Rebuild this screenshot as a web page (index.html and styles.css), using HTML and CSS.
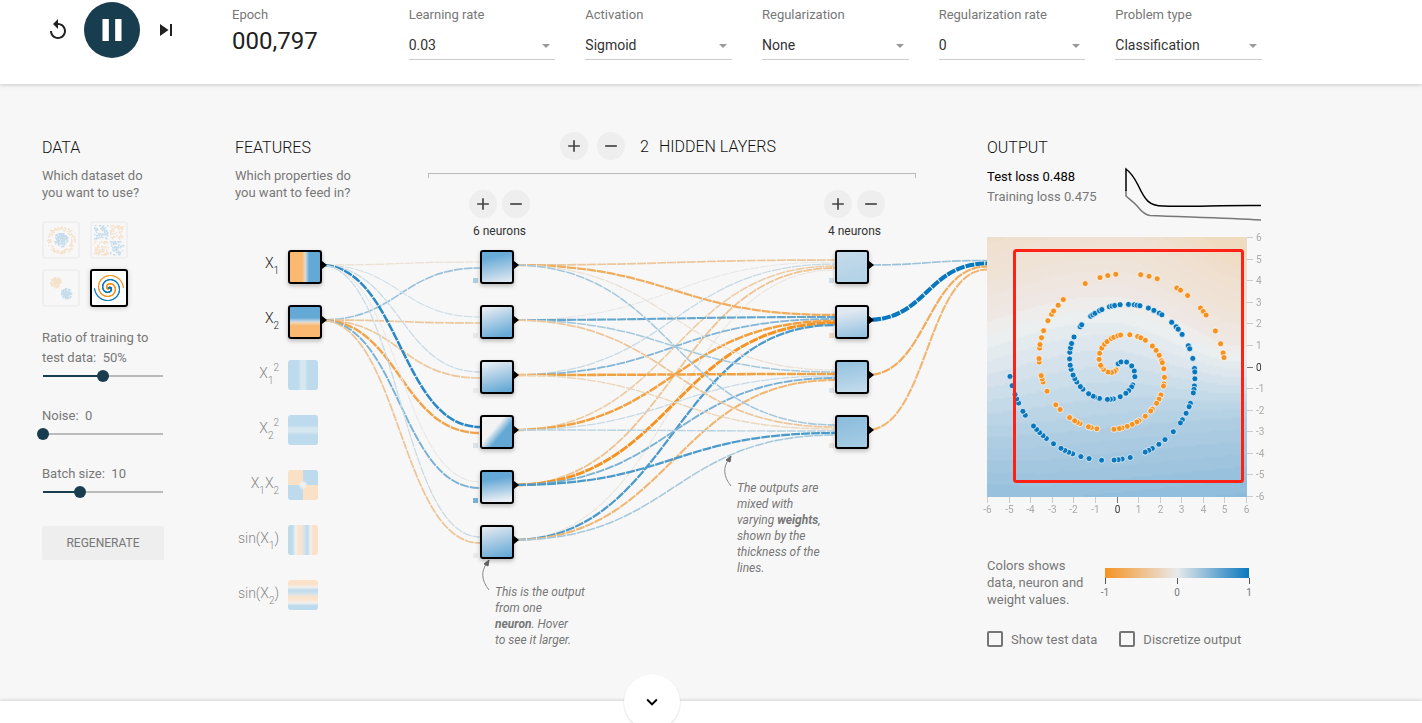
FILE: index.html
```html
<!DOCTYPE html>
<html lang="en">
<head>
<meta charset="utf-8">
<title>Neural Network Playground</title>
<link rel="stylesheet" href="styles.css">
</head>
<body>
<header class="topbar">
  <div class="topbar-inner">
    <div class="timeline">
      <button class="icon-button" aria-label="Reset"><svg width="24" height="24" viewBox="0 0 24 24"><path d="M12 5V1L7 6l5 5V7c3.31 0 6 2.69 6 6s-2.69 6-6 6-6-2.69-6-6H4c0 4.42 3.58 8 8 8s8-3.58 8-8-3.58-8-8-8z"/></svg></button>
      <button class="play-button" aria-label="Pause"><svg width="38" height="38" viewBox="0 0 24 24"><path d="M6 19h4V5H6v14zm8-14v14h4V5h-4z"/></svg></button>
      <button class="icon-button" aria-label="Step"><svg width="24" height="24" viewBox="0 0 24 24"><path d="M6 18l8.500-6L6 6v12zM16 6v12h2V6h-2z"/></svg></button>
    </div>
    <div class="control">
      <span class="control-label">Epoch</span>
      <output class="epoch">000,797</output>
    </div>
    <div class="control">
      <label class="control-label" for="rate">Learning rate</label>
      <div class="select"><select id="rate"><option>0.03</option></select></div>
    </div>
    <div class="control">
      <label class="control-label" for="activation">Activation</label>
      <div class="select"><select id="activation"><option>Sigmoid</option></select></div>
    </div>
    <div class="control">
      <label class="control-label" for="regularization">Regularization</label>
      <div class="select"><select id="regularization"><option>None</option></select></div>
    </div>
    <div class="control">
      <label class="control-label" for="regrate">Regularization rate</label>
      <div class="select"><select id="regrate"><option>0</option></select></div>
    </div>
    <div class="control">
      <label class="control-label" for="problem">Problem type</label>
      <div class="select"><select id="problem"><option>Classification</option></select></div>
    </div>
  </div>
</header>

<main class="stage">
  <div class="stage-inner">
    <section class="data">
      <h2 class="heading">DATA</h2>
      <p class="hint">Which dataset do<br>you want to use?</p>
      <div class="datasets">
        <button class="dataset" aria-label="Circle"><svg class="thumb" data-set="circle" viewBox="0 0 34 34"></svg></button>
        <button class="dataset" aria-label="Exclusive or"><svg class="thumb" data-set="xor" viewBox="0 0 34 34"></svg></button>
        <button class="dataset" aria-label="Gaussian"><svg class="thumb" data-set="gauss" viewBox="0 0 34 34"></svg></button>
        <button class="dataset selected" aria-label="Spiral"><svg class="thumb" data-set="spiral" viewBox="0 0 34 34"></svg></button>
      </div>
      <div class="slider">
        <label for="ratio">Ratio of training to<br>test data:&nbsp; 50%</label>
        <input id="ratio" type="range" min="10" max="90" value="50" style="--fill: 50%">
      </div>
      <div class="slider">
        <label for="noise">Noise:&nbsp; 0</label>
        <input id="noise" type="range" min="0" max="50" value="0" style="--fill: 0%">
      </div>
      <div class="slider">
        <label for="batch">Batch size:&nbsp; 10</label>
        <input id="batch" type="range" min="1" max="30" value="10" style="--fill: 31%">
      </div>
      <button class="regenerate">REGENERATE</button>
    </section>

    <section class="network">
      <div class="network-head">
        <div>
          <h2 class="heading">FEATURES</h2>
          <p class="hint">Which properties do<br>you want to feed in?</p>
        </div>
        <div class="hidden-layers">
          <div class="layer-count">
            <button class="round" aria-label="Add layer"><svg width="20" height="20" viewBox="0 0 24 24"><path d="M19 13h-6v6h-2v-6H5v-2h6V5h2v6h6v2z"/></svg></button>
            <button class="round" aria-label="Remove layer"><svg width="20" height="20" viewBox="0 0 24 24"><path d="M19 13H5v-2h14v2z"/></svg></button>
            <span class="count">2</span><span>HIDDEN LAYERS</span>
          </div>
          <div class="bracket"></div>
          <div class="layer-controls">
            <div class="layer-control">
              <button class="round" aria-label="Add neuron to layer 1"><svg width="20" height="20" viewBox="0 0 24 24"><path d="M19 13h-6v6h-2v-6H5v-2h6V5h2v6h6v2z"/></svg></button>
              <button class="round" aria-label="Remove neuron from layer 1"><svg width="20" height="20" viewBox="0 0 24 24"><path d="M19 13H5v-2h14v2z"/></svg></button>
              <span class="neurons">6 neurons</span>
            </div>
            <div class="layer-control">
              <button class="round" aria-label="Add neuron to layer 2"><svg width="20" height="20" viewBox="0 0 24 24"><path d="M19 13h-6v6h-2v-6H5v-2h6V5h2v6h6v2z"/></svg></button>
              <button class="round" aria-label="Remove neuron from layer 2"><svg width="20" height="20" viewBox="0 0 24 24"><path d="M19 13H5v-2h14v2z"/></svg></button>
              <span class="neurons">4 neurons</span>
            </div>
          </div>
        </div>
      </div>
      <div class="diagram">
        <svg class="links" width="752" height="408" viewBox="0 0 752 408">
          <g id="links"></g>
          <g id="marks"></g>
          <g class="feature-labels">
            <text x="44" y="29" class="on">X<tspan class="script" dy="6">1</tspan></text>
            <text x="44" y="84" class="on">X<tspan class="script" dy="6">2</tspan></text>
            <text x="44" y="139">X<tspan class="script" dy="6">1</tspan><tspan class="script" dy="-13">2</tspan></text>
            <text x="44" y="194">X<tspan class="script" dy="6">2</tspan><tspan class="script" dy="-13">2</tspan></text>
            <text x="44" y="249">X<tspan class="script" dy="6">1</tspan><tspan dy="-6">X</tspan><tspan class="script" dy="6">2</tspan></text>
            <text x="44" y="304">sin(X<tspan class="script" dy="6">1</tspan><tspan dy="-6">)</tspan></text>
            <text x="44" y="359">sin(X<tspan class="script" dy="6">2</tspan><tspan dy="-6">)</tspan></text>
          </g>
          <g class="pointer">
            <path d="M254 351C246 341 246 332 252 324"/><path class="tip" d="M254 321l-1 6-4-2z"/>
            <path d="M496 247C488 237 488 228 494 220"/><path class="tip" d="M496 217l-1 6-4-2z"/>
          </g>
        </svg>
        <div class="column features">
          <div class="node f-x1"></div>
          <div class="node f-x2"></div>
          <div class="node off f-x1sq"></div>
          <div class="node off f-x2sq"></div>
          <div class="node off f-x1x2"></div>
          <div class="node off f-sin1"></div>
          <div class="node off f-sin2"></div>
        </div>
        <div class="column layer-one">
          <div class="node n1"></div>
          <div class="node n2"></div>
          <div class="node n3"></div>
          <div class="node n4"></div>
          <div class="node n5"></div>
          <div class="node n6"></div>
        </div>
        <div class="column layer-two">
          <div class="node m1"></div>
          <div class="node m2"></div>
          <div class="node m3"></div>
          <div class="node m4"></div>
        </div>
        <p class="callout neuron-note">This is the output<br>from one<br><b>neuron</b>. Hover<br>to see it larger.</p>
        <p class="callout weight-note">The outputs are<br>mixed with<br>varying <b>weights</b>,<br>shown by the<br>thickness of the<br>lines.</p>
      </div>
    </section>

    <section class="output">
      <h2 class="heading">OUTPUT</h2>
      <div class="loss">
        <div class="loss-values">
          <div class="test-loss">Test loss 0.488</div>
          <div>Training loss 0.475</div>
        </div>
        <svg width="137" height="56" viewBox="0 0 137 56">
          <path class="train-line" d="M1 24 1 30C4 33 8 35 13 41C17 46 20 49 25 49.500C60 51 100 52 136 54"/>
          <path class="test-line" d="M1 25V3C5 6 9 11 13 19C20 34 24 40 38 40C60 41 100 39 136 39.500"/>
        </svg>
      </div>
      <div class="plot">
        <canvas id="heat" width="130" height="130"></canvas>
        <svg class="plot-layer" width="275" height="280" viewBox="0 0 275 280">
          <g id="axes"></g>
          <g id="points"></g>
          <rect class="selection" x="27.500" y="13.500" width="228" height="231" rx="2"/>
        </svg>
      </div>
      <div class="legend">
        <p>Colors shows<br>data, neuron and<br>weight values.</p>
        <div class="scale">
          <div class="scale-bar"></div>
          <div class="scale-ticks"><span>-1</span><span>0</span><span>1</span></div>
        </div>
      </div>
      <div class="options">
        <label><input type="checkbox">Show test data</label>
        <label><input type="checkbox">Discretize output</label>
      </div>
    </section>
  </div>
</main>
<div class="below">
  <button class="more" aria-label="Read more"><svg width="22" height="22" viewBox="0 0 24 24"><path d="M7.410 8.590 12 13.170l4.590-4.580L18 10l-6 6-6-6z"/></svg></button>
</div>
<script src="playground.js"></script>
</body>
</html>
```

FILE: styles.css
```css
* { box-sizing: border-box; }
html { overflow: hidden; }
body {
  margin: 0;
  background: #fff;
  color: #777;
  font: 13px/17px Roboto, "Liberation Sans", sans-serif;
}
h2, p { margin: 0; }
button {
  padding: 0;
  border: 0;
  background: none;
  color: inherit;
  font: inherit;
  cursor: pointer;
}
svg { display: block; }

.topbar {
  position: relative;
  height: 84px;
  background: #fff;
  box-shadow: 0 1px 4px rgba(0, 0, 0, .2);
}
.topbar-inner {
  display: grid;
  grid-template-columns: 160px repeat(6, 1fr);
  gap: 30px;
  max-width: 1262px;
  padding: 2px 0 0 42px;
}
.timeline {
  display: flex;
  align-items: center;
  gap: 14px;
  height: 56px;
  padding-left: 4px;
}
.icon-button svg { fill: #212121; }
.play-button {
  display: grid;
  place-items: center;
  flex: none;
  width: 56px;
  height: 56px;
  border-radius: 50%;
  background: #183d4e;
}
.play-button svg { fill: #fff; }
.control { padding-top: 4px; }
.control-label { display: block; }
.epoch {
  display: block;
  margin-top: 4px;
  color: #212121;
  font-size: 24px;
  line-height: 28px;
}
.select {
  position: relative;
  margin-top: 8px;
}
.select::after {
  content: "";
  position: absolute;
  right: 5px;
  top: 13px;
  border: 4px solid transparent;
  border-top-color: #999;
  border-bottom: 0;
  pointer-events: none;
}
.select select {
  display: block;
  width: 100%;
  height: 29px;
  padding: 0;
  border: 0;
  border-bottom: 1px solid #ccc;
  border-radius: 0;
  appearance: none;
  background: none;
  color: #333;
  font: inherit;
  font-size: 14px;
}

.stage {
  padding: 48px 0 54px 42px;
  background: #f7f7f7;
}
.stage-inner {
  display: grid;
  grid-template-columns: 193px minmax(752px, 1fr) 275px;
  max-width: 1220px;
}
.heading {
  color: #111;
  font-size: 16px;
  font-weight: 300;
  line-height: 32px;
}
.hint { margin-top: 3px; }

.datasets {
  display: grid;
  grid-template-columns: 38px 38px;
  gap: 10px;
  margin: 20px 0 21px;
}
.dataset {
  height: 38px;
  border: 2px solid #efefef;
  border-radius: 3px;
}
.dataset .thumb { opacity: .2; }
.dataset.selected {
  border-color: #000;
  background: #fff;
  box-shadow: 0 1px 5px rgba(0, 0, 0, .2);
}
.dataset.selected .thumb { opacity: 1; }
.thumb { width: 34px; height: 34px; }

.slider { margin-bottom: 24px; line-height: 20px; }
.slider label { display: block; }
.slider input {
  display: block;
  width: 132px;
  height: 12px;
  margin: 2px 0 0 -5px;
  appearance: none;
  background: linear-gradient(to right, #183d4e var(--fill), #bbb var(--fill)) center / calc(100% - 12px) 2px no-repeat;
}
.slider input::-webkit-slider-thumb {
  appearance: none;
  width: 12px;
  height: 12px;
  border-radius: 50%;
  background: #183d4e;
}
.regenerate {
  width: 122px;
  height: 34px;
  margin-top: 4px;
  border-radius: 2px;
  background: #eee;
  font-size: 12px;
}

.network-head {
  display: grid;
  grid-template-columns: 193px 488px;
}
.layer-count {
  display: flex;
  align-items: center;
  justify-content: center;
  gap: 9px;
  height: 28px;
  padding-right: 8px;
  color: #111;
  font-size: 16px;
  font-weight: 300;
}
.count { margin: 0 1px 0 6px; }
.round {
  display: grid;
  place-items: center;
  width: 28px;
  height: 28px;
  border-radius: 50%;
  background: #eee;
}
.round svg { fill: #444; }
.bracket {
  height: 5px;
  margin-top: 13px;
  border: 1px solid #bbb;
  border-bottom: 0;
}
.layer-controls {
  display: flex;
  justify-content: space-between;
  padding: 12px 31px 0 41px;
}
.layer-control {
  display: grid;
  grid-template-columns: 28px 28px;
  gap: 5px;
}
.neurons {
  grid-column: 1 / 3;
  justify-self: center;
  color: #333;
  font-size: 12px;
  line-height: 16px;
}

.diagram { position: relative; height: 408px; }
.links { position: absolute; left: 0; top: 0; overflow: visible; }
.links path { fill: none; }
#links path { stroke-dasharray: 9 1; stroke-dashoffset: -265; }
.links .arrow { fill: #000; }
.pointer path { stroke: #888; }
.pointer .tip { fill: #666; stroke: #666; }
.feature-labels { fill: #888; font-size: 14px; font-weight: 300; text-anchor: end; }
.feature-labels .on { fill: #222; }
.script { font-size: 10px; }
.column {
  position: absolute;
  top: 11px;
  display: grid;
  grid-auto-rows: 34px;
  gap: 21px;
}
.features { left: 53px; }
.layer-one { left: 245px; }
.layer-two { left: 600px; }
.node {
  width: 34px;
  height: 34px;
  border: 2px solid #000;
  border-radius: 3px;
  box-shadow: 0 2px 4px rgba(0, 0, 0, .25);
}
.node.off {
  width: 30px;
  height: 30px;
  border: 0;
  box-shadow: none;
}
.f-x1 { background: linear-gradient(to right, #fbb871 40%, #eed6bc 50%, #bcd6e8 53%, #64a8d6 64%); }
.f-x2 { background: linear-gradient(to bottom, #64a8d6 36%, #bcd6e8 47%, #eed6bc 52%, #fbb871 62%); }
.f-x1sq { background: linear-gradient(to right, #bedaed 34%, #d7e7ef 44% 56%, #bedaed 66%); }
.f-x2sq { background: linear-gradient(to bottom, #bedaed 34%, #d7e7ef 44% 56%, #bedaed 66%); }
.f-x1x2 { background: radial-gradient(circle, #eef0f1 2px, rgba(238, 240, 241, 0) 5px), conic-gradient(#bedaed 25%, #fae0c4 0 50%, #bedaed 0 75%, #fae0c4 0); }
.f-sin1 { background: linear-gradient(to right, #bedaed 14%, #f2f0ec 26%, #fae3cc 36% 44%, #d5e4ec 54%, #bedaed 64%, #f2f0ec 76%, #fae1c8 84%); }
.f-sin2 { background: linear-gradient(to bottom, #fae1c8 14%, #f2f0ec 24%, #bedaed 34%, #d5e4ec 46%, #fae3cc 56% 64%, #f2f0ec 76%, #bedaed 86%); }
.n1 { background: linear-gradient(168deg, #69abd7 20%, #dde7ef 95%); }
.n2 { background: linear-gradient(162deg, #e0e8f0 10%, #69abd7 88%); }
.n3 { background: linear-gradient(165deg, #e3eaf1 8%, #66a9d6 92%); }
.n4 { background: linear-gradient(130deg, #f3f3f3 40%, #64a8d6 62%); }
.n5 { background: linear-gradient(172deg, #64a8d6 25%, #e6ecf3 90%); }
.n6 { background: linear-gradient(165deg, #e0e8f0 5%, #66a9d6 95%); }
.m1 { background: linear-gradient(165deg, #c5dbea, #b0d1e6); }
.m2 { background: linear-gradient(170deg, #dfe7f1 20%, #94c2e0 95%); }
.m3 { background: linear-gradient(170deg, #92c1df, #c5dcec); }
.m4 { background: linear-gradient(165deg, #8abbdc, #a7cde4); }
.callout {
  position: absolute;
  font-size: 12px;
  font-style: italic;
  line-height: 16px;
}
.neuron-note { left: 260px; top: 345px; }
.weight-note { left: 502px; top: 241px; }

.loss {
  display: flex;
  justify-content: space-between;
  margin-top: 2px;
  line-height: 20px;
}
.loss-values { padding-top: 1px; }
.loss path { fill: none; }
.loss .test-line { stroke: #000; stroke-width: 1.5; }
.loss .train-line { stroke: #777; stroke-width: 1.5; }
.test-loss { color: #000; }
.plot { position: relative; margin-top: 15px; }
#heat { position: absolute; left: 0; top: 0; width: 260px; height: 260px; }
.plot-layer { position: relative; overflow: visible; }
.plot-layer line { stroke: #ccc; }
.plot-layer text { fill: #aaa; font-size: 10px; }
.plot-layer line.zero { stroke: #777; }
.plot-layer text.zero { fill: #333; }
.plot-layer circle { stroke: rgba(255, 255, 255, .7); }
.selection { fill: none; stroke: #fe2116; stroke-width: 3; }
.legend {
  display: flex;
  gap: 20px;
  margin-top: 40px;
}
.legend p { width: 98px; }
.scale { width: 144px; padding-top: 11px; }
.scale-bar {
  height: 10px;
  background: linear-gradient(to right, #f59322, #e8eaeb, #0877bd);
}
.scale-ticks {
  display: flex;
  justify-content: space-between;
  margin: 0 -10px;
  font-size: 10px;
}
.scale-ticks span { width: 20px; text-align: center; }
.scale-ticks span::before {
  content: "";
  display: block;
  width: 1px;
  height: 6px;
  margin: 0 auto;
  background: #555;
}
.options {
  display: flex;
  gap: 22px;
  margin-top: 23px;
}
.options label { display: flex; align-items: center; gap: 8px; height: 16px; white-space: nowrap; }
.options input {
  width: 16px;
  height: 16px;
  margin: 0;
  border: 2px solid #757575;
  border-radius: 2px;
  appearance: none;
}

.below {
  position: relative;
  display: flex;
  justify-content: center;
  max-width: 1304px;
  height: 22px;
}
.below::before {
  content: "";
  position: absolute;
  left: 0;
  top: 0;
  width: 100vw;
  height: 22px;
  background: #fff;
  box-shadow: 0 -1px 3px rgba(0, 0, 0, .15);
}
.more {
  position: absolute;
  top: -27px;
  display: grid;
  place-items: center;
  width: 56px;
  height: 56px;
  border-radius: 50%;
  background: #fff;
  box-shadow: 0 1px 2px rgba(0, 0, 0, .15);
}
```

FILE: playground.js
```js
const SVG = "http://www.w3.org/2000/svg";
const ORANGE = [245, 147, 34], NEUTRAL = [232, 234, 235], BLUE = [8, 119, 189];

function add(parent, name, attributes, text) {
  const element = document.createElementNS(SVG, name);
  for (const key in attributes) element.setAttribute(key, attributes[key]);
  if (text !== undefined) element.textContent = text;
  parent.appendChild(element);
}
function mix(a, b, k) {
  return "rgb(" + a.map((c, i) => Math.round(c + (b[i] - c) * k)).join(",") + ")";
}
function weightColor(w) {
  return mix(NEUTRAL, w < 0 ? ORANGE : BLUE, Math.min(1, Math.abs(w)));
}

// One row per target node, one weight per source node.
const layers = [
  { from: 85, to: 245, weights: [[-.12, .35], [.1, -.4], [.14, -.4], [.85, -.8], [-.03, .5], [.14, -.42]] },
  { from: 277, to: 600, weights: [
    [-.4, -.03, .15, -.35, -.45, -.06],
    [-.7, .6, .45, -.85, -1.1, .7],
    [-.12, .3, -.85, .14, .5, -.6],
    [.3, -.4, -.22, .22, .7, .3]] },
  { from: 632, to: 752, weights: [[.35, 1.7, -.7, -.6]] }
];
const links = document.getElementById("links");
for (const { from, to, weights } of layers) {
  const middle = (from + to) / 2;
  weights.forEach((row, target) => row.forEach((w, source) => {
    const y1 = 26 + source * 55;
    const y2 = 26 + target * 55 + (source - (row.length - 1) / 2) / row.length * 12;
    add(links, "path", {
      d: `M${from} ${y1}C${middle} ${y1} ${middle} ${y2} ${to} ${y2}`,
      stroke: weightColor(w),
      "stroke-width": 1 + 1.8 * Math.abs(w)
    });
  }));
}

// Output arrows and bias squares.
const marks = document.getElementById("marks");
const biases = [[.25, -.02, 0, .05, .5, 0], [.1, -.2, .05, -.05]];
[[87, 2], [279, 6], [634, 4]].forEach(([x, count]) => {
  for (let i = 0; i < count; i++) {
    add(marks, "path", { class: "arrow", d: `M${x} ${22 + i * 55}l5 4-5 4z` });
  }
});
biases.forEach((column, c) => column.forEach((b, i) =>
  add(marks, "rect", { x: c ? 594 : 238, y: 39 + i * 55, width: 5, height: 5, fill: weightColor(b) })));

// Heat map of the output, painted in discrete shades.
const stops = [[0, 239, 219, 192], [.1, 239, 223, 205], [.25, 239, 228, 218], [.33, 239, 231, 227],
  [.4, 237, 240, 240], [.48, 225, 233, 238], [.55, 211, 225, 236], [.65, 191, 215, 231],
  [.75, 174, 205, 226], [.88, 157, 196, 222], [1, 139, 187, 219]];
function shade(v) {
  const i = Math.max(1, stops.findIndex(s => s[0] >= v));
  const a = stops[i - 1], b = stops[i];
  return mix(a.slice(1), b.slice(1), (v - a[0]) / (b[0] - a[0]));
}
const context = document.getElementById("heat").getContext("2d");
for (let row = 0; row < 130; row++) {
  for (let col = 0; col < 130; col++) {
    const u = col / 129, t = row / 129;
    const k = Math.min(1, Math.max(0, (t - .4) / .3));
    const upper = .04 - .1 * Math.sin(Math.PI * Math.min(1, u * 1.1)) + .14 * Math.max(0, u - .5);
    const lower = -.1 * u + .04;
    let v = .12 + .82 * (t - upper * (1 - k) - lower * k);
    v -= .22 * Math.max(0, u - .6) * (1 - t) * (1 - t);
    v += .5 * Math.max(0, .2 - u) * Math.max(0, t - .7);
    v = Math.min(.999, Math.max(.001, v));
    context.fillStyle = shade(Math.round(v * 24) / 24);
    context.fillRect(col, row, 1, 1);
  }
}

// Axes run from -6 to 6.
const axes = document.getElementById("axes");
for (let n = -6; n <= 6; n++) {
  const x = Math.round((n + 6) * 259 / 12) + .5, y = Math.round((6 - n) * 259 / 12) + .5;
  const mark = n === 0 ? "zero" : "tick";
  add(axes, "line", { class: mark, x1: x, x2: x, y1: 260, y2: 266 });
  add(axes, "text", { class: mark, x, y: 276, "text-anchor": "middle" }, n);
  add(axes, "line", { class: mark, x1: 260, x2: 266, y1: y, y2: y });
  add(axes, "text", { class: mark, x: 269, y: y + 3 }, n);
}

// Sample indices along each arm of the spiral, out of 250.
const blueArm = [8, 15, 25, 34, 41, 47, 55, 57, 61, 64, 69, 74, 76, 78, 83, 86, 87, 90, 94, 96, 99, 101,
  103, 106, 108, 111, 114, 116, 118, 121, 126, 127, 132, 133, 134, 136, 137, 140, 141, 142, 144, 147, 149,
  150, 151, 154, 156, 158, 159, 163, 165, 166, 168, 172, 173, 176, 179, 180, 182, 184, 185, 186, 189, 190,
  192, 194, 195, 198, 201, 203, 205, 206, 207, 211, 213, 214, 215, 218, 221, 223, 225, 226, 227, 228, 230,
  232, 233, 234, 235, 236, 239, 240, 242, 243, 244, 246, 248];
const orangeArm = [7, 12, 18, 24, 32, 36, 38, 45, 51, 56, 60, 63, 67, 69, 72, 74, 80, 85, 87, 90, 95, 98,
  101, 104, 105, 108, 112, 115, 116, 120, 122, 124, 127, 128, 131, 134, 135, 137, 139, 141, 142, 144, 150,
  152, 153, 156, 157, 158, 160, 164, 166, 171, 174, 175, 176, 180, 181, 184, 185, 187, 189, 192, 194, 195,
  197, 199, 206, 210, 212, 214, 220, 222, 224, 229, 230, 232, 236, 237, 238, 242, 245, 247, 248];
const points = document.getElementById("points");
function spiral(parent, indices, sign, size, reach, r, color) {
  for (const i of indices) {
    const f = i / 250, angle = f * 3.5 * Math.PI;
    add(parent, "circle", {
      cx: (size + sign * reach * f * Math.sin(angle)).toFixed(1),
      cy: (size - sign * reach * f * Math.cos(angle)).toFixed(1),
      r, fill: color
    });
  }
}
spiral(points, orangeArm, -1, 130, 108.3, 3, "#f59322");
spiral(points, blueArm, 1, 130, 108.3, 3, "#0877bd");

// Thumbnails of the four data sets.
let seed = 7;
function random() {
  seed = seed * 16807 % 2147483647;
  return seed / 2147483647;
}
function dot(svg, x, y, blue) {
  add(svg, "rect", { x: Math.round(x), y: Math.round(y), width: 1.4, height: 1.4, fill: blue ? "#0877bd" : "#f59322" });
}
for (const svg of document.querySelectorAll(".thumb")) {
  if (svg.dataset.set === "spiral") {
    const all = Array.from({ length: 250 }, (_, i) => i);
    spiral(svg, all, -1, 17, 14.5, .6, "#f59322");
    spiral(svg, all, 1, 17, 14.5, .6, "#0877bd");
    continue;
  }
  for (let i = 0; i < 260; i++) {
    const a = random() * 2 * Math.PI, blue = i % 2 === 0;
    if (svg.dataset.set === "circle") {
      const r = blue ? 7 * Math.sqrt(random()) : 10 + 4 * random();
      dot(svg, 16.5 + r * Math.cos(a), 16.5 + r * Math.sin(a), blue);
    } else if (svg.dataset.set === "gauss") {
      const r = 5.5 * random(), cx = blue ? 22 : 11, cy = blue ? 22 : 11;
      dot(svg, cx + r * Math.cos(a), cy + r * Math.sin(a), blue);
    } else {
      const x = random() * 14 + 1.5, y = random() * 14 + 1.5, right = random() < .5;
      dot(svg, right ? x + 16 : x, right !== blue ? y : y + 16, blue);
    }
  }
}
```
